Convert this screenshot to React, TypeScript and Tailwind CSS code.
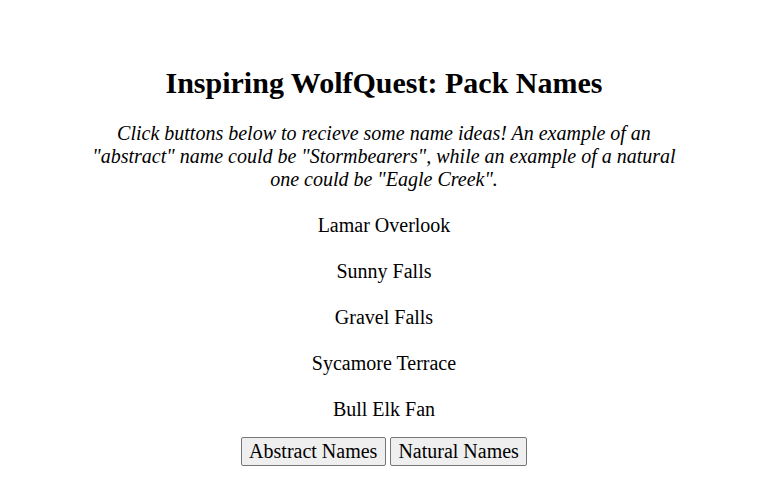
import React, { useState } from 'react';

const natural = ['Lamar Overlook', 'Sunny Falls', 'Gravel Falls', 'Sycamore Terrace', 'Bull Elk Fan'];
const abstract = ['Stormbearers', 'Nightwatch', 'Ashfall', 'Frostfang', 'Moonchasers'];

export default function App() {
  const [names, setNames] = useState<string[]>(natural);

  return (
    <div className="min-h-screen bg-white text-black text-center font-['Liberation_Serif',serif] pt-[64px]">
      <h1 className="text-[30px] leading-[37px] font-bold">Inspiring WolfQuest: Pack Names</h1>
      <p className="mx-auto mt-[21px] w-[600px] text-[20px] leading-[23px] italic">
        Click buttons below to recieve some name ideas! An example of an "abstract" name could be
        "Stormbearers", while an example of a natural one could be "Eagle Creek".
      </p>
      <div className="mt-[23px] flex flex-col gap-[23px] text-[20px] leading-[23px]">
        {names.map((n) => (
          <div key={n}>{n}</div>
        ))}
      </div>
      <div className="mt-[16px] flex justify-center gap-[4px] text-[20px] leading-[23px]">
        <button
          onClick={() => setNames(abstract)}
          className="bg-[#efefef] border border-[#767676] rounded-[2px] px-[7.5px] py-[2px]"
        >
          Abstract Names
        </button>
        <button
          onClick={() => setNames(natural)}
          className="bg-[#efefef] border border-[#767676] rounded-[2px] px-[7.5px] py-[2px]"
        >
          Natural Names
        </button>
      </div>
    </div>
  );
}
